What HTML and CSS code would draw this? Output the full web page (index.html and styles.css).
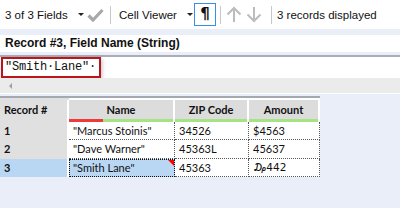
FILE: index.html
```html
<!DOCTYPE html>
<html>
<head>
<meta charset="utf-8">
<link rel="stylesheet" href="styles.css">
</head>
<body>
<div class="toolbar">
  <span class="tb-text fields">3 of 3 Fields</span>
  <span class="caret"></span>
  <svg class="check" width="17" height="14" viewBox="0 0 17 14"><path d="M1.5 7.5 L6 12 L15.5 2" fill="none" stroke="#a8a8a8" stroke-width="3.2"/></svg>
  <span class="sep"></span>
  <span class="tb-text viewer">Cell Viewer</span>
  <span class="caret caret2"></span>
  <span class="pilcrow">¶</span>
  <span class="sep sep2"></span>
  <svg class="arrow" width="16" height="17" viewBox="0 0 16 17"><path d="M8 16 V2 M1.5 8.5 L8 2 L14.5 8.5" fill="none" stroke="#bcbcbc" stroke-width="2"/></svg>
  <svg class="arrow arrow2" width="16" height="17" viewBox="0 0 16 17"><path d="M8 1 V15 M1.5 8.5 L8 15 L14.5 8.5" fill="none" stroke="#bcbcbc" stroke-width="2"/></svg>
  <span class="sep sep3"></span>
  <span class="tb-text status">3 records displayed</span>
</div>
<div class="title">Record #3, Field Name (String)</div>
<div class="editor">
  <div class="hl"><span class="mono">"Smith·Lane"·</span></div>
</div>
<div class="hscroll"><span class="larrow"></span></div>
<div class="grid">
  <div class="rh hdr">Record #</div>
  <div class="ch name">Name</div>
  <div class="ch">ZIP Code</div>
  <div class="ch">Amount</div>

  <div class="rh">1</div>
  <div class="cell">"Marcus Stoinis"</div>
  <div class="cell">34526</div>
  <div class="cell">$4563</div>

  <div class="rh">2</div>
  <div class="cell">"Dave Warner"</div>
  <div class="cell">45363L</div>
  <div class="cell">45637</div>

  <div class="rh sel">3</div>
  <div class="cell selcell">"Smith Lane"</div>
  <div class="cell">45363</div>
  <div class="cell amt">₯442</div>
</div>
</body>
</html>
```
FILE: styles.css
```css
html, body {
  margin: 0;
  padding: 0;
}
body {
  width: 400px;
  height: 208px;
  overflow: hidden;
  background: #eaeef8;
  font-family: "Liberation Sans", Arial, sans-serif;
  font-size: 11.5px;
  color: #111;
}
.toolbar {
  height: 29px;
  background: #fff;
  display: flex;
  align-items: center;
  padding-left: 5px;
  margin-bottom: 6px;
}
.tb-text {
  white-space: nowrap;
  line-height: 16px;
}
.fields {
  width: 62px;
}
.caret {
  width: 0;
  height: 0;
  border-left: 3px solid transparent;
  border-right: 3px solid transparent;
  border-top: 3px solid #222;
  margin-left: 11px;
}
.check {
  margin-left: 3px;
}
.sep {
  width: 1px;
  height: 18px;
  background: #c8c8c8;
  margin-left: 6px;
}
.viewer {
  margin-left: 8px;
  width: 57px;
}
.caret2 {
  margin-left: 11px;
}
.pilcrow {
  margin-left: 1px;
  width: 20px;
  height: 21px;
  border: 1px solid #3a8ee6;
  box-sizing: content-box;
  font-family: "DejaVu Sans", sans-serif;
  font-weight: bold;
  font-size: 15px;
  line-height: 21px;
  text-align: center;
  color: #111;
}
.sep2 {
  margin-left: 4px;
}
.arrow {
  margin-left: 5px;
}
.arrow2 {
  margin-left: 4px;
}
.sep3 {
  margin-left: 9px;
}
.status {
  margin-left: 5px;
}
.title {
  height: 17px;
  background: #fff;
  font-weight: bold;
  font-size: 12px;
  line-height: 17px;
  padding-left: 5px;
}
.editor {
  margin-top: 3px;
  border-top: 2px solid #a9adb6;
  background: #fff;
  height: 21px;
  position: relative;
}
.hl {
  position: absolute;
  left: 1px;
  top: 0;
  width: 96px;
  height: 17px;
  border: 2px solid #b8161c;
  box-shadow: 1px 2px 4px rgba(0,0,0,0.25);
  background: #fff;
}
.mono {
  font-family: "Liberation Mono", "DejaVu Sans Mono", monospace;
  font-size: 12px;
  line-height: 17px;
  padding-left: 2px;
  color: #111;
  white-space: nowrap;
  letter-spacing: -0.2px;
}
.hscroll {
  height: 15px;
  background: #ebebeb;
  border-bottom: 1px solid #fff;
  position: relative;
}
.larrow {
  position: absolute;
  left: 9px;
  top: 5px;
  width: 0;
  height: 0;
  border-top: 3px solid transparent;
  border-bottom: 3px solid transparent;
  border-right: 3px solid #a0a0a0;
}
.grid {
  border-top: 2px solid #a4a8b0;
  margin-top: 2px;
  display: grid;
  grid-template-columns: 69px 106px 74px 71px;
  grid-template-rows: 22px 18px 19px 18px;
  width: 320px;
  background: #fff;
  padding-top: 2px;
  position: relative;
  font-family: Lato, "Liberation Sans", sans-serif;
  font-size: 11px;
}
.grid::before {
  content: "";
  position: absolute;
  left: 0;
  top: 0;
  width: 69px;
  height: 2px;
  background: #e0e0e0;
}
.rh {
  background: #e0e0e0;
  font-weight: bold;
  padding-left: 4px;
  line-height: 18px;
  margin-right: 2px;
}
.rh.hdr {
  line-height: 20px;
}
.rh.sel {
  background: #b9d7f3;
}
.ch {
  background: #dcdcdc;
  font-weight: bold;
  text-align: center;
  line-height: 19px;
  border-bottom: 3px solid #a6e385;
  margin-right: 2px;
}
.ch.name {
  border-image: linear-gradient(to right, #f03a3a 0, #f03a3a 34px, #a6e385 34px) 0 0 1 0 / 0 0 3px 0;
}
.cell {
  padding-left: 4px;
  line-height: 17px;
  border-right: 1px dotted #555;
  border-bottom: 1px dotted #555;
  white-space: nowrap;
  overflow: hidden;
}
.amt {
  font-family: "DejaVu Sans", sans-serif;
  font-size: 10.5px;
}
.selcell {
  background: #b9d7f3;
  border: 1px dotted #111;
  line-height: 16px;
  padding-left: 3px;
  position: relative;
}
.selcell::after {
  content: "";
  position: absolute;
  right: 0;
  top: 0;
  width: 0;
  height: 0;
  border-top: 6px solid #f00;
  border-left: 6px solid transparent;
}
```
